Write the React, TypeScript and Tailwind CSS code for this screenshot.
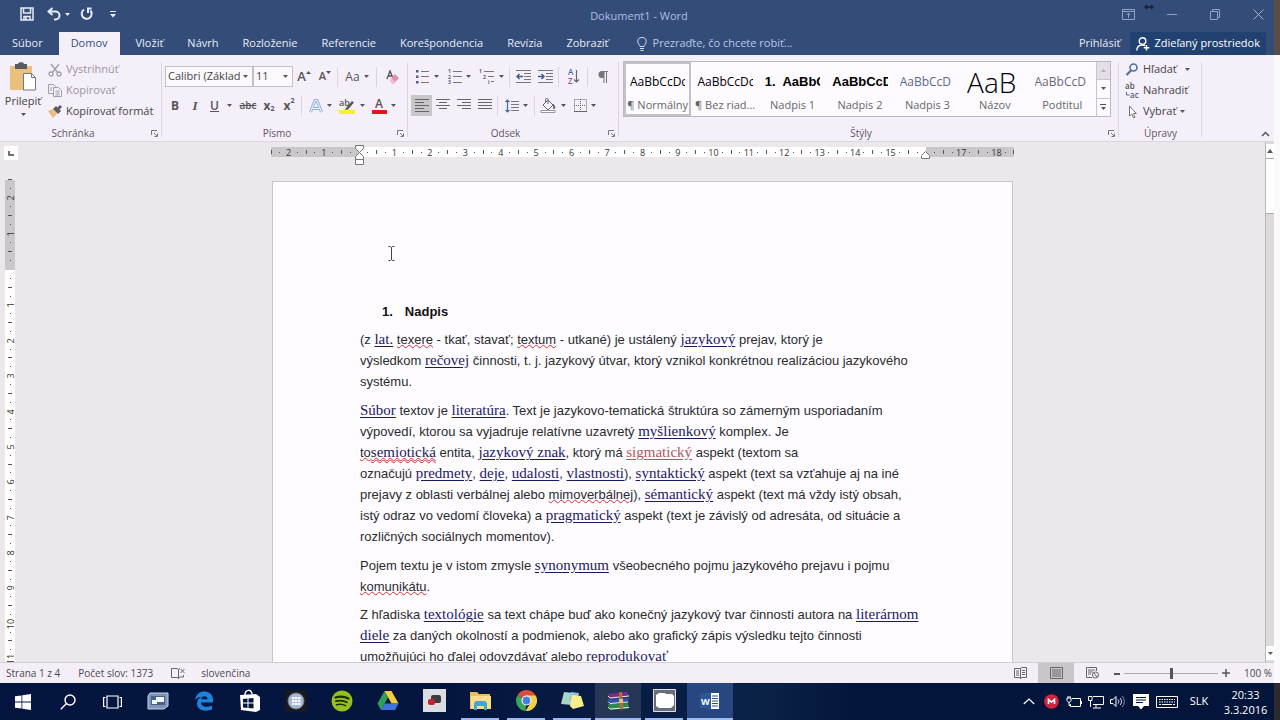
import type { ReactNode } from 'react';

type Children = { children: ReactNode };

function Caret() {
  return (
    <svg width="5" height="3" viewBox="0 0 5 3" className="shrink-0">
      <path d="M0 0h5L2.5 3z" fill="#555" />
    </svg>
  );
}

function Sep() {
  return <span className="mx-0.5 h-5 w-px shrink-0 bg-[#dcd5df]" />;
}

function Tool({
  label,
  children,
  className = 'w-5',
}: Children & { label: string; className?: string }) {
  return (
    <button
      type="button"
      aria-label={label}
      className={`flex h-[21px] shrink-0 items-center justify-center ${className}`}
    >
      {children}
    </button>
  );
}

function Split({ label, children }: Children & { label: string }) {
  return (
    <Tool label={label} className="w-8 gap-1">
      {children}
      <Caret />
    </Tool>
  );
}

function Lines({ rows }: { rows: [number, number][] }) {
  return (
    <svg width="14" height="13" viewBox="0 0 14 13" stroke="#666">
      {rows.map(([from, to], i) => (
        <path key={i} d={`M${from} ${i * 3 + 0.5}H${to}`} />
      ))}
    </svg>
  );
}

function Group({
  title,
  width,
  launcher = true,
  children,
}: Children & { title: string; width: string; launcher?: boolean }) {
  return (
    <section className={`relative flex shrink-0 flex-col ${width}`}>
      <div className="h-[68px]">{children}</div>
      <h2 className={`text-center text-[10px] leading-4 text-[#5d5862] ${launcher ? 'pr-4' : ''}`}>
        {title}
      </h2>
      {launcher && (
        <button type="button" aria-label={`${title} – možnosti`} className="absolute right-1 bottom-1">
          <svg width="7" height="7" viewBox="0 0 7 7" fill="none" stroke="#777">
            <path d="M.5 5V.5H6M3 3l3 3M6.500 3.500v3h-3" />
          </svg>
        </button>
      )}
      <span className="absolute top-1 right-0 bottom-1 w-px bg-[#dcd5df]" />
    </section>
  );
}

function TitleBar() {
  return (
    <div className="grid h-8 grid-cols-3 items-center text-[#cbd6ee]">
      <div className="flex items-center pb-1 pl-5">
        <button type="button" aria-label="Uložiť" className="mr-[13px]">
          <svg width="14" height="14" viewBox="0 0 14 14" fill="none" stroke="#e6ecf8" strokeWidth="1.500">
            <path d="M1 1h12v12H1zM3.500 1v5h7V1M4 13V9.500h6V13M6 10v3" />
          </svg>
        </button>
        <button type="button" aria-label="Späť" className="mr-1">
          <svg width="14" height="14" viewBox="0 0 14 14" fill="none" stroke="#e6ecf8" strokeWidth="2">
            <path d="M5.500 1 1.500 4.500 5.500 8M2 4.500h6.500a4 4 0 0 1 0 8H7" />
          </svg>
        </button>
        <svg width="5" height="3" viewBox="0 0 5 3" className="mr-2.5">
          <path d="M0 0h5L2.500 3z" fill="#e6ecf8" />
        </svg>
        <button type="button" aria-label="Znova" className="mr-4">
          <svg width="14" height="14" viewBox="0 0 14 14" fill="none" stroke="#e6ecf8" strokeWidth="2">
            <path d="M4 2.500a5 5 0 1 0 6.500 1M7 1.500h4.500M8 1v5" />
          </svg>
        </button>
        <button type="button" aria-label="Prispôsobiť panel">
          <svg width="6" height="7" viewBox="0 0 6 7" fill="#e6ecf8">
            <path d="M0 0h6v1H0zM0 3h6L3 6.500z" />
          </svg>
        </button>
      </div>
      <h1 className="pl-1 text-center text-[11px] text-[#aebfe6]">Dokument1 - Word</h1>
      <div className="flex items-center justify-end gap-8 pr-2.5 pb-1">
        <button type="button" aria-label="Zobrazenie pása s nástrojmi">
          <svg width="13" height="11" viewBox="0 0 13 11" fill="none" stroke="#8ea2cb">
            <path d="M.5.500h12v10H.5zM.5 2.500h12M6.500 9V4.500M4.500 6l2-2 2 2" />
          </svg>
        </button>
        <button type="button" aria-label="Minimalizovať">
          <svg width="11" height="11" viewBox="0 0 11 11" stroke="#8ea2cb">
            <path d="M0 5.500h10" />
          </svg>
        </button>
        <button type="button" aria-label="Obnoviť">
          <svg width="11" height="11" viewBox="0 0 11 11" fill="none" stroke="#8ea2cb">
            <path d="M.5 2.500h7v8h-7zM2.500 2.500v-2h7v8h-2" />
          </svg>
        </button>
        <button type="button" aria-label="Zavrieť">
          <svg width="11" height="11" viewBox="0 0 11 11" stroke="#a2b3d6">
            <path d="M.5.500l10 10M10.500.500l-10 10" />
          </svg>
        </button>
      </div>
    </div>
  );
}

const tabs = [
  'Súbor',
  'Domov',
  'Vložiť',
  'Návrh',
  'Rozloženie',
  'Referencie',
  'Korešpondencia',
  'Revízia',
  'Zobraziť',
];

function Tabs() {
  return (
    <nav className="flex h-[23px] items-stretch text-[11px] text-[#e8edf8]">
      {tabs.map((tab) => (
        <button
          type="button"
          key={tab}
          className={tab === 'Domov' ? 'mx-1 bg-[#f5eff9] px-3 text-[#33507f]' : 'px-3'}
        >
          {tab}
        </button>
      ))}
      <button type="button" className="ml-4 flex items-center gap-1.5 text-[#b9c8ea]">
        <svg width="10" height="14" viewBox="0 0 10 14" fill="none" stroke="#d5dff5">
          <path d="M3 9.500C3 8 .8 7 .8 4.500a4.200 4 0 0 1 8.400 0C9.200 7 7 8 7 9.500zM3 11.500h4M3.500 13.500h3" />
        </svg>
        Prezraďte, čo chcete robiť...
      </button>
      <a href="#prihlasit" className="ml-auto flex items-center pr-2.5">
        Prihlásiť
      </a>
      <button type="button" className="mr-2 flex items-center gap-1 bg-[#214171] px-1.5 text-white">
        <svg width="14" height="14" viewBox="0 0 14 14" fill="none" stroke="#fff" strokeWidth="1.400">
          <circle cx="6.500" cy="4" r="3.300" />
          <path d="M.7 13.500c.3-3.500 2.500-5.500 5.500-5.500 1.200 0 2 .2 2.800.8M10.500 8v5.500M7.800 10.800h5.500" />
        </svg>
        Zdieľaný prostriedok
      </button>
    </nav>
  );
}

function Clipboard() {
  return (
    <Group title="Schránka" width="w-[162px]">
      <div className="flex">
        <button type="button" className="flex w-[46px] flex-col items-center pt-1 text-[#444]">
          <svg width="28" height="29" viewBox="0 0 28 29">
            <path d="M1 4h22v24H1z" fill="#e9c07e" />
            <path d="M6 2h3c0-2.500 6-2.500 6 0h3v5H6z" fill="#5a5a60" />
            <path d="M14.500 11.500h8l4 4V28h-12z" fill="#fff" stroke="#777" />
            <path d="M22.500 11.500v4h4" fill="none" stroke="#777" />
          </svg>
          <span className="mt-0.5 leading-4">Prilepiť</span>
          <span className="mt-1">
            <Caret />
          </span>
        </button>
        <div className="flex flex-col pt-px pl-0.5 text-[#9b959f]">
          <button type="button" className="flex h-[21px] items-center gap-1">
            <svg width="14" height="14" viewBox="0 0 14 14" fill="none" stroke="#a29da8" strokeWidth="1.300">
              <path d="M3 1l7 9M11 1L4 10" />
              <circle cx="3" cy="11" r="2" />
              <circle cx="11" cy="11" r="2" />
            </svg>
            Vystrihnúť
          </button>
          <button type="button" className="flex h-[21px] items-center gap-1">
            <svg width="14" height="13" viewBox="0 0 14 13" fill="#f5eff9" stroke="#a29da8">
              <path d="M.5.500h5l2 2v7h-7z" />
              <path d="M5.500 3.500h5l3 3v6h-8zM7.500 7h4M7.500 9h4M7.500 11h4M2 4h2M2 6h2" />
            </svg>
            Kopírovať
          </button>
          <button type="button" className="flex h-[21px] items-center gap-1 text-[#444]">
            <svg width="14" height="13" viewBox="0 0 14 13">
              <path d="M0 6l5-2 4 5-4 4z" fill="#e9bd7c" />
              <path d="M5 4l3-3 5 5-3 3z" fill="#5a5a60" />
              <path d="M9 3l3-3 2 2-3 3z" fill="#5a5a60" />
            </svg>
            Kopírovať formát
          </button>
        </div>
      </div>
    </Group>
  );
}

function FontSelect({ label, value, width }: { label: string; value: string; width: string }) {
  return (
    <span
      className={`relative flex h-[21px] shrink-0 items-center border border-[#c5bfc8] bg-[#fcf9fe] ${width}`}
    >
      <select aria-label={label} className="w-full appearance-none bg-transparent pr-3 pl-0.5 text-[#444]">
        <option>{value}</option>
      </select>
      <span className="pointer-events-none absolute right-1">
        <Caret />
      </span>
    </span>
  );
}

function FontGroup() {
  return (
    <Group title="Písmo" width="w-[246px]">
      <div className="flex flex-col gap-2 pt-2 pl-[3px] text-[#555]">
        <div className="flex items-center">
          <FontSelect label="Písmo" value="Calibri (Základ" width="w-[88px]" />
          <FontSelect label="Veľkosť písma" value="11" width="w-10" />
          <Tool label="Zväčšiť písmo" className="w-[22px]">
            <span className="text-[13px] font-semibold">A</span>
            <svg width="5" height="3" viewBox="0 0 5 3" className="mb-2">
              <path d="M0 3h5L2.500 0z" fill="#555" />
            </svg>
          </Tool>
          <Tool label="Zmenšiť písmo">
            <span className="text-[11px] font-semibold">A</span>
            <span className="mb-2">
              <Caret />
            </span>
          </Tool>
          <Sep />
          <Tool label="Zmeniť veľkosť písmen" className="w-[34px] gap-1">
            <span className="text-[12px]">Aa</span>
            <Caret />
          </Tool>
          <Sep />
          <Tool label="Vymazať formátovanie" className="w-7">
            <svg width="14" height="14" viewBox="0 0 14 14">
              <path d="M1 9l3-8 2.500 6M2 6h4" fill="none" stroke="#555" strokeWidth="1.400" />
              <path d="M4 10l5-6 4 4-5 5.500H6z" fill="#e58fb0" />
              <path d="M4 10l1.500-2 4 4L8 13.500H6z" fill="#f3bcd1" />
            </svg>
          </Tool>
        </div>
        <div className="flex items-center text-[12px]">
          <Tool label="Tučné"><b>B</b></Tool>
          <Tool label="Kurzíva"><i className="font-[Liberation_Serif,serif] text-[13px] font-bold">I</i></Tool>
          <Tool label="Podčiarknuté" className="w-8 gap-2">
            <span className="font-semibold underline">U</span>
            <Caret />
          </Tool>
          <Tool label="Prečiarknuté" className="w-[22px]">
            <span className="text-[10px] font-semibold line-through">abc</span>
          </Tool>
          <Tool label="Dolný index">
            <b>x</b>
            <span className="mt-2 text-[7px] font-bold">2</span>
          </Tool>
          <Tool label="Horný index">
            <b>x</b>
            <span className="mb-2 text-[7px] font-bold">2</span>
          </Tool>
          <Sep />
          <Split label="Textové efekty">
            <svg width="14" height="14" viewBox="0 0 14 14" fill="none">
              <path d="M1.500 13L6 1.500h2L12.500 13M3.500 9.500h7" stroke="#8fb2dd" strokeWidth="3" />
              <path d="M1.500 13L6 1.500h2L12.500 13M3.500 9.500h7" stroke="#f7f9ff" />
            </svg>
          </Split>
          <Split label="Farba zvýraznenia">
            <svg width="17" height="16" viewBox="0 0 17 16" className="overflow-visible">
              <text x="0" y="8" fontSize="9" fontWeight="600" fill="#555">ab</text>
              <path d="M7 10l6-7 2 1.500-6 7-3 .5z" fill="#555" />
              <path d="M0 12h16v4H0z" fill="#f7f32a" />
            </svg>
          </Split>
          <Split label="Farba písma">
            <svg width="15" height="16" viewBox="0 0 15 16" className="overflow-visible">
              <text x="3" y="10" fontSize="12" fontWeight="600" fill="#555">A</text>
              <path d="M0 12h15v4H0z" fill="#e4141e" />
            </svg>
          </Split>
        </div>
      </div>
    </Group>
  );
}

function ParagraphGroup() {
  return (
    <Group title="Odsek" width="w-[211px]">
      <div className="flex flex-col gap-2 pt-2 pl-[3px] text-[#555]">
        <div className="flex items-center">
          <Split label="Odrážky">
            <svg width="14" height="14" viewBox="0 0 14 14">
              <path d="M0 0h2.500v2.500H0zM0 5.500h2.500V8H0zM0 11h2.500v2.500H0z" fill="#4a5e86" />
              <path d="M5 1.500h8M5 6.500h8M5 12.500h8" stroke="#777" />
            </svg>
          </Split>
          <Split label="Číslovanie">
            <svg width="14" height="15" viewBox="0 0 14 15" className="overflow-visible" fill="#4a5e86" fontSize="5" fontWeight="700">
              <text x="0" y="4">1</text>
              <text x="0" y="9.500">2</text>
              <text x="0" y="15">3</text>
              <path d="M5 2.500h9M5 7.500h9M5 13.500h9" stroke="#777" />
            </svg>
          </Split>
          <Split label="Viacúrovňový zoznam">
            <svg width="16" height="15" viewBox="0 0 16 15" className="overflow-visible" fill="#4a5e86" fontSize="5" fontWeight="700">
              <text x="0" y="4">1</text>
              <text x="4" y="9.500">2</text>
              <text x="9" y="15">i</text>
              <path d="M5 2.500h10M9 7.500h6M12 12.500h3" stroke="#777" />
            </svg>
          </Split>
          <Sep />
          <Tool label="Zmenšiť zarážku" className="w-[22px]">
            <svg width="15" height="13" viewBox="0 0 15 13" fill="none" stroke="#777">
              <path d="M0 .5h15M8 3.500h7M8 6.500h7M8 9.500h7M0 12.500h15" />
              <path d="M7 6.500H1M3.500 4L1 6.500 3.500 9" stroke="#3f5c93" strokeWidth="1.500" />
            </svg>
          </Tool>
          <Tool label="Zväčšiť zarážku" className="w-[22px]">
            <svg width="15" height="13" viewBox="0 0 15 13" fill="none" stroke="#777">
              <path d="M0 .5h15M8 3.500h7M8 6.500h7M8 9.500h7M0 12.500h15" />
              <path d="M0 6.500h6M3.500 4L6 6.500 3.500 9" stroke="#3f5c93" strokeWidth="1.500" />
            </svg>
          </Tool>
          <Sep />
          <Tool label="Zoradiť" className="w-6">
            <svg width="13" height="15" viewBox="0 0 13 15" className="overflow-visible" fontSize="8" fontWeight="600">
              <text x="1" y="6" fill="#4468a8">A</text>
              <text x="1" y="15" fill="#8d5a9e">Z</text>
              <path d="M9.500 1v12M7 10.500L9.500 13l2.500-2.500" fill="none" stroke="#666" strokeWidth="1.200" />
            </svg>
          </Tool>
          <Sep />
          <Tool label="Zobraziť všetko" className="w-[26px]">
            <svg width="10" height="12" viewBox="0 0 10 12" fill="#777">
              <path d="M4 0h6v1H9v11H8V1H6.500v11h-1V7H4a3.500 3.500 0 0 1 0-7z" />
            </svg>
          </Tool>
        </div>
        <div className="flex items-center">
          <Tool label="Zarovnať vľavo" className="w-[21px] bg-[#c9c6cb]">
            <Lines rows={[[0, 14], [0, 9], [0, 14], [0, 9], [0, 14]]} />
          </Tool>
          <Tool label="Centrovať" className="w-[21px]">
            <Lines rows={[[0, 14], [3, 11], [0, 14], [3, 11]]} />
          </Tool>
          <Tool label="Zarovnať vpravo" className="w-[21px]">
            <Lines rows={[[0, 14], [5, 14], [0, 14], [5, 14]]} />
          </Tool>
          <Tool label="Zarovnať podľa okraja" className="w-[21px]">
            <Lines rows={[[0, 14], [0, 14], [0, 14], [0, 14]]} />
          </Tool>
          <Sep />
          <Split label="Riadkovanie">
            <svg width="14" height="14" viewBox="0 0 14 14" fill="none" stroke="#777">
              <path d="M6 2.500h8M6 5.500h8M6 8.500h8M6 11.500h8" />
              <path d="M2.500 1v12M.5 3l2-2 2 2M.5 11l2 2 2-2" stroke="#3f6ca8" strokeWidth="1.200" />
            </svg>
          </Split>
          <Sep />
          <Split label="Podfarbenie">
            <svg width="17" height="15" viewBox="0 0 17 15" fill="none" stroke="#666">
              <path d="M3 7l5-5 5 5-5 5zM5.500 5V1.500C5.500 0 8 0 8 1.500V6" />
              <path d="M13 6c2 2 2.500 4 1 5z" fill="#666" />
              <path d="M1 12.500h14v2H1z" fill="#fff" stroke="#999" />
            </svg>
          </Split>
          <Split label="Orámovanie">
            <svg width="13" height="13" viewBox="0 0 13 13" fill="none" stroke="#666">
              <path d="M.5.500h12v12M.5.500v12M6.500 0v12M0 6.500h12" strokeDasharray="1 1" />
              <path d="M0 12.500h13" />
            </svg>
          </Split>
        </div>
      </div>
    </Group>
  );
}

const styles = [
  { name: '¶ Normálny', sample: 'AaBbCcDc', look: 'text-[12px] text-black' },
  { name: '¶ Bez riad...', sample: 'AaBbCcDc', look: 'text-[12px] text-black' },
  { name: 'Nadpis 1', sample: '1.  AaBbC', look: 'font-[Liberation_Sans,sans-serif] text-[13px] font-bold text-black' },
  { name: 'Nadpis 2', sample: 'AaBbCcD', look: 'font-[Liberation_Sans,sans-serif] text-[13px] font-bold text-black' },
  { name: 'Nadpis 3', sample: 'AaBbCcD', look: 'text-[12px] text-[#5a6a86]' },
  { name: 'Názov', sample: 'AaB', look: 'text-[28px] leading-none font-light text-black' },
  { name: 'Podtitul', sample: 'AaBbCcD', look: 'text-[12px] text-[#6d6872]' },
];

function StylesGroup() {
  return (
    <Group title="Štýly" width="w-[500px]">
      <div className="pt-[3px] pr-2 pl-1">
        <div className="flex h-14 border border-[#bdb8c0] bg-[#fdfbff]">
          {styles.map((style, i) => (
            <button
              type="button"
              key={style.name}
              className={`flex min-w-0 flex-1 flex-col items-center border-2 pt-[3px] ${i === 0 ? 'border-[#c4c1c6]' : 'border-transparent'}`}
            >
              <span className="w-full px-1">
                <span
                  className={`flex h-[30px] items-center overflow-hidden whitespace-pre ${style.look}`}
                >
                  {style.sample}
                </span>
              </span>
              <span className="leading-4 whitespace-nowrap text-[#666]">{style.name}</span>
            </button>
          ))}
          <div className="flex w-3.5 flex-col border-l border-[#c9c4cc]">
            <button type="button" aria-label="Nahor" className="flex flex-1 items-center justify-center bg-[#e4dfe6]">
              <svg width="5" height="3" viewBox="0 0 5 3">
                <path d="M0 3h5L2.500 0z" fill="#b5b0b8" />
              </svg>
            </button>
            <button type="button" aria-label="Nadol" className="flex flex-1 items-center justify-center border-y border-[#c9c4cc]">
              <Caret />
            </button>
            <button type="button" aria-label="Viac" className="flex flex-1 flex-col items-center justify-center gap-0.5">
              <span className="h-px w-1.5 bg-[#555]" />
              <Caret />
            </button>
          </div>
        </div>
      </div>
    </Group>
  );
}

function EditGroup() {
  return (
    <Group title="Úpravy" width="w-[83px]" launcher={false}>
      <div className="flex flex-col pt-px pl-1.5 text-[#444]">
        <button type="button" className="flex h-[21px] items-center gap-1">
          <svg width="14" height="13" viewBox="0 0 14 13" fill="none" stroke="#4a6fa5" strokeWidth="1.600">
            <circle cx="8.500" cy="4.500" r="3.500" />
            <path d="M6 7.500L1.500 12" strokeWidth="2.200" />
          </svg>
          Hľadať
          <span className="ml-1">
            <Caret />
          </span>
        </button>
        <button type="button" className="flex h-[21px] items-center gap-1">
          <svg width="14" height="14" viewBox="0 0 14 14" className="overflow-visible" fontSize="8" fontWeight="600">
            <text x="0" y="5" fill="#555">ab</text>
            <text x="5" y="14" fill="#4d5f8a">ac</text>
            <path d="M1.500 8v3h3" fill="none" stroke="#4a6fa5" />
          </svg>
          Nahradiť
        </button>
        <button type="button" className="flex h-[21px] items-center gap-1">
          <svg width="14" height="14" viewBox="0 0 14 14" fill="#fff" stroke="#777">
            <path d="M4.500 1v10l2.300-2 1.700 4 1.500-.7L8.400 8.500h3z" />
          </svg>
          Vybrať
          <Caret />
        </button>
      </div>
    </Group>
  );
}

function Ribbon() {
  return (
    <div className="flex h-[87px] border-b border-[#dcd6de] bg-[#f5eff9] pt-[3px] text-[11px]">
      <Clipboard />
      <FontGroup />
      <ParagraphGroup />
      <StylesGroup />
      <EditGroup />
      <button type="button" aria-label="Zbaliť pás" className="mt-auto mr-1 mb-1 ml-auto">
        <svg width="9" height="6" viewBox="0 0 9 6" fill="none" stroke="#555" strokeWidth="1.500">
          <path d="M1 5l3.500-3.500L8 5" />
        </svg>
      </button>
    </div>
  );
}

// A ruler stretch marked in quarter centimetres, from one value to another.
function Scale({ from, to, vertical = false }: { from: number; to: number; vertical?: boolean }) {
  const marks = Array.from({ length: (to - from) * 4 + 1 }, (_, i) => from + i / 4);
  return (
    <div
      className={`flex justify-between text-[9px] leading-none text-[#333] ${vertical ? 'h-full w-full flex-col' : 'w-full'}`}
    >
      {marks.map((mark) => (
        <span
          key={mark}
          className={`flex items-center justify-center ${vertical ? 'h-0 -rotate-90' : 'h-2.5 w-0'}`}
        >
          {mark % 1 === 0 && mark !== 0 && mark !== 16 && Math.abs(mark)}
          {Math.abs(mark % 1) === 0.5 && <i className="h-1 w-px shrink-0 bg-[#555]" />}
          {mark % 0.5 !== 0 && <i className="size-px shrink-0 bg-[#555]" />}
        </span>
      ))}
    </div>
  );
}

function HorizontalRuler() {
  return (
    <div className="relative mt-[5px] flex h-2.5 w-[743px]">
      <div className="flex w-[88px] bg-[#c9c7ca]">
        <Scale from={-2.5} to={0} />
      </div>
      <div className="flex flex-1 bg-white">
        <Scale from={0} to={16} />
      </div>
      <div className="flex w-[88px] bg-[#c9c7ca]">
        <Scale from={16} to={18.5} />
      </div>
      <svg width="9" height="21" viewBox="0 0 9 21" className="absolute -top-0.5 left-[84px]" fill="#fff" stroke="#777">
        <path d="M.5.500h8v3l-4 4-4-4zM4.500 7.500l4 4v3h-8v-3zM.5 14.500h8v5h-8z" />
      </svg>
      <svg width="9" height="8" viewBox="0 0 9 8" className="absolute top-1 right-[84px]" fill="#fff" stroke="#777">
        <path d="M4.500.500l4 4v3h-8v-3z" />
      </svg>
    </div>
  );
}

function Link({ children }: Children) {
  return (
    <a
      href="#odkaz"
      className="font-[Liberation_Serif,serif] text-[15px] leading-none text-[#1c1a5e] underline underline-offset-2"
    >
      {children}
    </a>
  );
}

function Typo({ children }: Children) {
  return (
    <span className="underline decoration-[#d0303a] decoration-wavy decoration-1 underline-offset-0">
      {children}
    </span>
  );
}

function Page() {
  return (
    <article className="relative mt-6 h-[900px] w-[741px] shrink-0 border border-[#c9c5cb] bg-[#fefcff] px-[87px] pt-[119px] font-[Liberation_Sans,sans-serif] text-[13px] leading-[21px] whitespace-nowrap text-[#2b2b2e]">
      <svg width="7" height="15" viewBox="0 0 7 15" className="absolute top-16 left-[115px]" fill="none" stroke="#444">
        <path d="M.5.500h2l1 1 1-1h2M3.500 1v13M.5 14.500h2l1-1 1 1h2" />
      </svg>
      <h2 className="mb-[7px] flex gap-3 pl-[22px] font-bold text-[#111]">
        <span>1.</span>Nadpis
      </h2>
      <p className="mb-2">
        (z <Link>lat.</Link> <Typo>texere</Typo> - tkať, stavať; <Typo>textum</Typo> - utkané) je ustálený{' '}
        <Link>jazykový</Link> prejav, ktorý je
        <br />
        výsledkom <Link>rečovej</Link> činnosti, t. j. jazykový útvar, ktorý vznikol konkrétnou realizáciou
        jazykového
        <br />
        systému.
      </p>
      <p className="mb-2">
        <Link>Súbor</Link> textov je <Link>literatúra</Link>. Text je jazykovo-tematická štruktúra so zámerným
        usporiadaním
        <br />
        výpovedí, ktorou sa vyjadruje relatívne uzavretý <Link>myšlienkový</Link> komplex. Je
        <br />
        <Typo>
          to<Link>semiotická</Link>
        </Typo>{' '}
        entita, <Link>jazykový znak</Link>, ktorý má{' '}
        <a
          href="#sigmaticky"
          className="font-[Liberation_Serif,serif] text-[15px] leading-none text-[#b0575c] underline underline-offset-2"
        >
          sigmatický
        </a>{' '}
        aspekt (textom sa
        <br />
        označujú <Link>predmety</Link>, <Link>deje</Link>, <Link>udalosti</Link>, <Link>vlastnosti</Link>),{' '}
        <Link>syntaktický</Link> aspekt (text sa vzťahuje aj na iné
        <br />
        prejavy z oblasti verbálnej alebo <Typo>mimoverbálnej</Typo>), <Link>sémantický</Link> aspekt (text má
        vždy istý obsah,
        <br />
        istý odraz vo vedomí človeka) a <Link>pragmatický</Link> aspekt (text je závislý od adresáta, od
        situácie a
        <br />
        rozličných sociálnych momentov).
      </p>
      <p className="mb-[7px]">
        Pojem textu je v istom zmysle <Link>synonymum</Link> všeobecného pojmu jazykového prejavu i pojmu
        <br />
        <Typo>komunikátu</Typo>.
      </p>
      <p>
        Z hľadiska <Link>textológie</Link> sa text chápe buď ako konečný jazykový tvar činnosti autora na{' '}
        <Link>literárnom</Link>
        <br />
        <Link>diele</Link> za daných okolností a podmienok, alebo ako grafický zápis výsledku tejto činnosti
        <br />
        umožňujúci ho ďalej odovzdávať alebo <Link>reprodukovať</Link>
      </p>
    </article>
  );
}

function Workspace() {
  return (
    <main className="flex min-h-0 flex-1 overflow-hidden bg-[#ece7eb]">
      <div className="flex w-5 shrink-0 flex-col">
        <button
          type="button"
          aria-label="Tabulátor"
          className="mt-1 ml-1 flex size-3.5 shrink-0 items-center justify-center bg-white"
        >
          <svg width="6" height="5" viewBox="0 0 6 5" fill="none" stroke="#444" strokeWidth="1.500">
            <path d="M1 0v4h5" />
          </svg>
        </button>
        <div className="mt-5 ml-[5px] w-2.5">
          <div className="h-[90px] bg-[#c9c7ca]">
            <Scale from={-2.5} to={0} vertical />
          </div>
          <div className="h-[425px] bg-white">
            <Scale from={0} to={12} vertical />
          </div>
        </div>
      </div>
      <div className="flex min-w-0 flex-1 flex-col items-center">
        <HorizontalRuler />
        <Page />
      </div>
      <div className="flex w-[9px] shrink-0 flex-col border-l border-[#b9b5bb] bg-[#dddadd]">
        <button type="button" aria-label="Posunúť nahor" className="mt-0.5 flex h-3.5 items-center justify-center bg-white">
          <svg width="6" height="4" viewBox="0 0 6 4">
            <path d="M0 4h6L3 0z" fill="#555" />
          </svg>
        </button>
        <div className="h-14 border-y border-[#aaa6ac] bg-white" />
        <button
          type="button"
          aria-label="Posunúť nadol"
          className="mt-auto mb-0.5 flex h-3.5 items-center justify-center bg-white"
        >
          <Caret />
        </button>
      </div>
    </main>
  );
}

function StatusBar() {
  return (
    <footer className="flex h-[21px] shrink-0 items-center border-t border-[#d3cdd6] bg-[#f4eff7] pl-1.5 text-[10px] text-[#4c4750]">
      <span className="mr-[18px]">Strana 1 z 4</span>
      <span className="mr-[18px]">Počet slov: 1373</span>
      <button type="button" aria-label="Kontrola pravopisu" className="mr-[15px]">
        <svg width="15" height="12" viewBox="0 0 15 12" fill="none" stroke="#666">
          <path d="M7.500 2.500v9l-1.500-1H.5v-9H6zM7.500 11l1.500-1h3.500V8M7.500 2.500L9 1.500M9.500 2l4 4M13.500 2l-4 4" />
        </svg>
      </button>
      <span>slovenčina</span>
      <div className="ml-auto flex h-full items-center">
        <button type="button" aria-label="Režim čítania" className="flex w-9 justify-center">
          <svg width="13" height="12" viewBox="0 0 13 12" fill="none" stroke="#666">
            <path d="M6.500 1.500v10l-1.500-1H.5v-9H5zM6.500 1.500l1.500-1v0h4.500v10H8l-1.500 1M2 4h3M2 6h3M2 8h3M8 3.500h3M8 5.500h3M8 7.500h3" />
          </svg>
        </button>
        <button type="button" aria-label="Rozloženie pri tlači" className="flex h-full w-9 items-center justify-center bg-[#c9c6cb]">
          <svg width="13" height="12" viewBox="0 0 13 12" fill="none" stroke="#666">
            <path d="M.5.500h12v11H.5zM2 3h9M2 5h9M2 7h9M2 9h9" />
          </svg>
        </button>
        <button type="button" aria-label="Webové rozloženie" className="flex w-9 justify-center">
          <svg width="13" height="12" viewBox="0 0 13 12" fill="none" stroke="#666">
            <path d="M6 10.500H.5V.500h10V4M2 3h7M2 5h5M2 7h3" />
            <circle cx="9.500" cy="8" r="3" />
            <path d="M8 6l3 4" />
          </svg>
        </button>
        <button type="button" aria-label="Oddialiť" className="ml-1 h-1.5 w-1.5 pt-0.5">
          <span className="block h-0.5 bg-[#555]" />
        </button>
        <input
          type="range"
          aria-label="Lupa"
          defaultValue={50}
          className="mx-1 h-3 w-[94px] appearance-none bg-[linear-gradient(#aaa,#aaa)] bg-[length:100%_1px] bg-center bg-no-repeat [&::-webkit-slider-thumb]:h-[11px] [&::-webkit-slider-thumb]:w-[3px] [&::-webkit-slider-thumb]:appearance-none [&::-webkit-slider-thumb]:bg-[#555]"
        />
        <button type="button" aria-label="Priblížiť">
          <svg width="8" height="8" viewBox="0 0 8 8" stroke="#555" strokeWidth="1.500">
            <path d="M0 4h8M4 0v8" />
          </svg>
        </button>
        <span className="w-11 pr-0.5 text-right">100 %</span>
      </div>
    </footer>
  );
}

const apps: { name: string; state?: 'open' | 'active' | 'raised'; icon: ReactNode }[] = [
  {
    name: 'Nástroje',
    icon: (
      <svg width="22" height="18" viewBox="0 0 22 18">
        <path d="M3 1h18v13l-4 3H1V4z" fill="#7f95b5" stroke="#c5d2e4" />
        <path d="M4 4h14v9H4z" fill="#44618f" />
        <path d="M5 8h5v4H5zM9 5h8v5H9z" fill="#f2f6fb" />
      </svg>
    ),
  },
  {
    name: 'Edge',
    icon: (
      <svg width="20" height="20" viewBox="0 0 20 20">
        <path
          d="M1 9C2 3 6 .500 10.500.500 16 .500 19 4.500 19 9v2.500H7c.2 3 2.800 4.300 5.500 4.300 2 0 3.800-.5 5.500-1.500v4c-2 1-4 1.400-6.500 1.400C6.500 19.700 3 17 3 12.500 3 9.500 4.700 7 7.500 5.700 5 5.800 2.500 7 1 9zm6.200-.8h6.300c0-2-1.300-3-3-3-1.800 0-3 1.200-3.300 3z"
          fill="#2182dc"
        />
      </svg>
    ),
  },
  {
    name: 'Obchod',
    icon: (
      <svg width="20" height="23" viewBox="0 0 20 23">
        <path d="M0 6l16-1v18L1 21zM16 5l4 3v13l-4 2z" fill="#fff" />
        <path d="M5 6C5 0 12 0 12 5" fill="none" stroke="#fff" strokeWidth="1.500" />
        <path d="M3 10l4.500-.5v4H3zM8.500 9.400l5-.5v4.600h-5zM3 14.500h4.500V19L3 18.500zM8.500 14.500h5v5l-5-.5z" fill="#04153c" />
      </svg>
    ),
  },
  {
    name: 'Tlačidlá',
    icon: (
      <svg width="22" height="22" viewBox="0 0 22 22">
        <path d="M0 0h22v22H0z" fill="#17191f" />
        <circle cx="11" cy="11" r="8" fill="#a9b8d0" stroke="#6f7d94" />
        <path d="M7 7h2.500v8H7zM10 7h2.500v8H10zM13 7h2.500v8H13z" fill="#f4f7fc" />
        <path d="M6 9.500h10M6 12.500h10" stroke="#a9b8d0" strokeWidth=".8" />
      </svg>
    ),
  },
  {
    name: 'Spotify',
    icon: (
      <svg width="22" height="22" viewBox="0 0 22 22" fill="none" stroke="#1c2b0c" strokeLinecap="round">
        <circle cx="11" cy="11" r="10.500" fill="#98c01d" stroke="none" />
        <path d="M4.500 7.500c4.500-1.500 9-1 13 1" strokeWidth="2.200" />
        <path d="M5 11.200c4-1.200 7.500-.8 11 1" strokeWidth="1.800" />
        <path d="M5.500 14.700c3.300-.9 6.300-.6 9 .9" strokeWidth="1.500" />
      </svg>
    ),
  },
  {
    name: 'Disk Google',
    icon: (
      <svg width="22" height="19" viewBox="0 0 22 19">
        <path d="M7.500 0L11 6.500 4 19 .500 12.500z" fill="#2f9e5b" />
        <path d="M7.500 0h7L21.500 12.500h-7z" fill="#f7cb3b" />
        <path d="M7.500 12.500h14L18 19H4z" fill="#3f74e0" />
      </svg>
    ),
  },
  {
    name: 'Záznam',
    icon: (
      <svg width="23" height="23" viewBox="0 0 23 23">
        <path d="M0 0h23v23H0z" fill="#dcdde1" />
        <rect x="8" y="6" width="10" height="8" rx="2" fill="#3e3b40" />
        <rect x="5" y="10" width="7" height="6" rx="2" fill="#c5232b" />
      </svg>
    ),
  },
  {
    name: 'Prieskumník',
    state: 'open',
    icon: (
      <svg width="21" height="19" viewBox="0 0 21 19">
        <path d="M0 1h7l2 2h11v15H0z" fill="#e8bf5b" />
        <path d="M1 5h20v13H1z" fill="#f9dd8a" />
        <path d="M4 19v-7l2-2h9l2 2v7h-3v-4H7v4z" fill="#3fa6cf" />
      </svg>
    ),
  },
  {
    name: 'Chrome',
    state: 'open',
    icon: (
      <svg width="21" height="21" viewBox="0 0 21 21">
        <path d="M10.500 10.500L1.500 5.200a10.400 10.400 0 0 1 18.200.3z" fill="#dd4b3e" />
        <path d="M10.500 10.500L1.500 5.200a10.400 10.400 0 0 0 8 15.700z" fill="#3ba35a" />
        <path d="M10.500 5.500h9.200a10.400 10.400 0 0 1-10.200 15.400L15 12z" fill="#f6ce44" />
        <circle cx="10.500" cy="10.500" r="5" fill="#fff" />
        <circle cx="10.500" cy="10.500" r="3.900" fill="#4380e0" />
      </svg>
    ),
  },
  {
    name: 'Rýchle poznámky',
    state: 'open',
    icon: (
      <svg width="23" height="19" viewBox="0 0 23 19">
        <path d="M3 1l9 1-1 12-11-1z" fill="#a9d6c9" />
        <path d="M10 1l8 1-2 10-8-2z" fill="#8fc3e6" />
        <path d="M11 4l9 1 3 10-11 3-3-3z" fill="#f8ee8b" />
      </svg>
    ),
  },
  {
    name: 'WinRAR',
    state: 'raised',
    icon: (
      <svg width="22" height="18" viewBox="0 0 22 18">
        <path d="M1 2l19-2 2 4-19 2z" fill="#7d2c8c" />
        <path d="M1 7l20-1 1 4-19 2z" fill="#334fae" />
        <path d="M1 12l20-1 1 5-19 2z" fill="#2f8a4a" />
        <path d="M1 4l2 2 19-2M1 9.500l2 2 18-1.500M1 15l2 2 19-1.500" fill="none" stroke="#eee" />
        <path d="M12 0l3 0 1 17-3 1z" fill="#b0703c" />
        <path d="M12 7h4v4h-4z" fill="#e6bf6c" />
      </svg>
    ),
  },
  {
    name: 'Galéria',
    state: 'open',
    icon: (
      <svg width="23" height="23" viewBox="0 0 23 23">
        <path d="M.5.500h22v22H.5z" fill="#6b6e79" stroke="#dfe2ea" />
        <path d="M3 6l3-2h6l1 1h6l2 2v9l-3 3H6l-3-2z" fill="#fff" />
      </svg>
    ),
  },
  {
    name: 'Word',
    state: 'active',
    icon: (
      <svg width="20" height="18" viewBox="0 0 20 18">
        <path d="M9 1h10v16H9z" fill="#fff" />
        <path d="M12 4h6M12 6.500h6M12 9h6M12 11.500h6M12 14h6" stroke="#2b4f8f" />
        <path d="M0 2l11-2v18L0 16z" fill="#2b5797" />
        <text x="1" y="13" fontSize="9" fontWeight="700" fill="#fff">W</text>
      </svg>
    ),
  },
];

function stateClass(state?: string) {
  if (state === 'active') return 'border-[#9db9ee] bg-[#28467f]';
  if (state === 'raised') return 'border-[#9db9ee] bg-[#263657]';
  return 'border-transparent';
}

function Taskbar() {
  return (
    <div className="flex h-[37px] shrink-0 bg-[linear-gradient(to_right,#04153f_0,#04153f_35%,#0b2247_60%,#04153c_67%)] text-[11px] text-white">
      <button type="button" aria-label="Štart" className="flex w-[45px] items-center justify-center">
        <svg width="16" height="16" viewBox="0 0 16 16" fill="#fff">
          <path d="M0 2.300L6.500 1.400v6.200H0zM7.300 1.300L16 0v7.600H7.300zM0 8.400h6.500v6.200L0 13.700zM7.300 8.400H16V16l-8.700-1.300z" />
        </svg>
      </button>
      <button type="button" aria-label="Hľadať" className="flex w-[45px] items-center justify-center">
        <svg width="16" height="16" viewBox="0 0 16 16" fill="none" stroke="#fff" strokeWidth="1.400">
          <circle cx="10" cy="6" r="5" />
          <path d="M6.500 9.500L.8 15.200" />
        </svg>
      </button>
      <button type="button" aria-label="Zobrazenie úloh" className="flex w-[45px] items-center justify-center">
        <svg width="19" height="14" viewBox="0 0 19 14" fill="none" stroke="#fff" strokeWidth="1.200">
          <path d="M4 1h11v12H4zM2.500 2.500H.6v9h1.900M16.500 2.500h1.900v9h-1.900" />
        </svg>
      </button>
      {apps.map((app) => (
        <button
          type="button"
          key={app.name}
          aria-label={app.name}
          className={`relative flex w-[46px] items-center justify-center border-b-2 ${stateClass(app.state)}`}
        >
          {app.icon}
          {app.state === 'open' && <span className="absolute inset-x-1 -bottom-0.5 h-0.5 bg-[#9db9ee]" />}
        </button>
      ))}
      <div className="ml-auto flex items-center">
        <button type="button" aria-label="Skryté ikony" className="flex w-[22px] justify-center">
          <svg width="12" height="7" viewBox="0 0 12 7" fill="none" stroke="#fff" strokeWidth="1.200">
            <path d="M.8 6L6 1l5.200 5" />
          </svg>
        </button>
        <button type="button" aria-label="Mega" className="flex w-[22px] justify-center">
          <svg width="15" height="15" viewBox="0 0 15 15">
            <circle cx="7.500" cy="7.500" r="7.300" fill="#d4223c" />
            <path d="M4.500 10V5.500l3 2.700 3-2.700V10" fill="none" stroke="#fff" strokeWidth="1.600" />
          </svg>
        </button>
        <button type="button" aria-label="Batéria" className="flex w-[23px] justify-center">
          <svg width="16" height="13" viewBox="0 0 16 13" fill="none" stroke="#fff">
            <path d="M6 3.500h8.500v8H4.500V9M15.500 6v3M1 3h4v2.500L3.500 7.500h-1L1 5.500zM2 1v2M4 1v2M3 7.500v3h2" />
          </svg>
        </button>
        <button type="button" aria-label="Sieť" className="flex w-[22px] justify-center">
          <svg width="16" height="14" viewBox="0 0 16 14" fill="none" stroke="#fff">
            <path d="M5 1.500h10.500v8H5M8 9.500v3M5 13h8M.5 1.500H4v4H.5zM2.500 5.500V12" />
          </svg>
        </button>
        <button type="button" aria-label="Hlasitosť" className="flex w-[22px] justify-center">
          <svg width="16" height="13" viewBox="0 0 16 13" fill="none" stroke="#fff">
            <path d="M.5 4.500h2.500l3-3v10l-3-3H.5zM8 4.500c1 1 1 3 0 4M10 3c2 2 2 5 0 7" />
            <path d="M12 1c3 3 3 8 0 11" stroke="#8593b5" />
          </svg>
        </button>
        <button type="button" aria-label="Centrum akcií" className="flex w-[23px] justify-center">
          <svg width="16" height="16" viewBox="0 0 16 16">
            <path d="M0 0h16v12h-5l-3 3.500L5 12H0z" fill="#fff" />
            <path d="M3 3.500h10M3 6h10M3 8.500h7" stroke="#04153c" />
          </svg>
        </button>
        <button type="button" aria-label="Klávesnica" className="flex w-[29px] justify-center">
          <svg width="22" height="12" viewBox="0 0 22 12" fill="none" stroke="#fff">
            <path d="M.5.500h21v11H.5z" />
            <path d="M3 3.500h16M3 6h16" strokeDasharray="1.500 1" />
            <path d="M3 8.500h2M6 8.500h10M17 8.500h2" />
          </svg>
        </button>
        <span className="w-9 text-center">SLK</span>
        <time className="w-[57px] text-center leading-[15px]">
          20:33
          <br />
          3.3.2016
        </time>
      </div>
    </div>
  );
}

export default function App() {
  return (
    <div className="flex h-screen overflow-hidden font-[Open_Sans,Noto_Sans,sans-serif]">
      <div className="flex min-w-0 flex-1 flex-col">
        <header className="relative shrink-0">
          <div className="bg-[#344c78]">
            <TitleBar />
            <Tabs />
          </div>
          <Ribbon />
          <svg width="10" height="6" viewBox="0 0 10 6" className="absolute top-1 right-[120px]" fill="#1d2230">
            <path d="M0 3l3-3v2h4V0l3 3-3 3V4H3v2z" />
          </svg>
        </header>
        <Workspace />
        <StatusBar />
        <Taskbar />
      </div>
      <aside className="flex w-1.5 shrink-0 flex-col bg-[#fbfafb]">
        <div className="h-[55px] bg-[#5b4c47]" />
        <div className="mt-auto h-[37px] bg-[#2d2a2c]" />
      </aside>
    </div>
  );
}
